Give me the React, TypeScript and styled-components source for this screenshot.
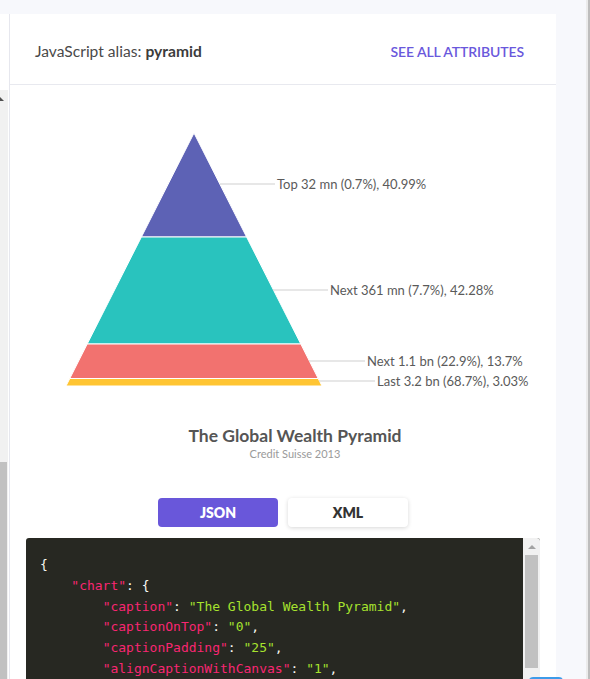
import React from "react";
import styled, {createGlobalStyle} from "styled-components";

const GlobalStyle = createGlobalStyle`
    html, body {
        margin: 0;
        padding: 0;
        background: #f7f8fc;
        overflow: hidden;
    }
    * {
        box-sizing: border-box;
    }
`

const uiFont = `Lato, "Open Sans", "Noto Sans", sans-serif`

interface Segment {
    points: string;
    color: string;
}

interface Label {
    x1: number;
    x2: number;
    y: number;
    text: string;
}

// pyramid slices, coordinates in svg space
const segments: Array<Segment> = [
    {points: "184,48 236.6,152 131.4,152", color: "#5d62b5"},
    {points: "131.4,152 236.6,152 290.8,259 77.2,259", color: "#29c3be"},
    {points: "77.2,259 290.8,259 308.2,293.5 59.8,293.5", color: "#f2726f"},
    {points: "59.8,293.5 308.2,293.5 312,301 56,301", color: "#ffc533"},
]

const labels: Array<Label> = [
    {x1: 210, x2: 265, y: 99, text: "Top 32 mn (0.7%), 40.99%"},
    {x1: 263, x2: 318, y: 205, text: "Next 361 mn (7.7%), 42.28%"},
    {x1: 299, x2: 355, y: 276, text: "Next 1.1 bn (22.9%), 13.7%"},
    {x1: 309, x2: 365, y: 296, text: "Last 3.2 bn (68.7%), 3.03%"},
]

type Tok = [string, "k" | "s" | "p"]

const codeLines: Array<{indent: number; toks: Array<Tok>}> = [
    {indent: 0, toks: [["{", "p"]]},
    {indent: 1, toks: [["\"chart\"", "k"], [": {", "p"]]},
    {indent: 2, toks: [["\"caption\"", "k"], [": ", "p"], ["\"The Global Wealth Pyramid\"", "s"], [",", "p"]]},
    {indent: 2, toks: [["\"captionOnTop\"", "k"], [": ", "p"], ["\"0\"", "s"], [",", "p"]]},
    {indent: 2, toks: [["\"captionPadding\"", "k"], [": ", "p"], ["\"25\"", "s"], [",", "p"]]},
    {indent: 2, toks: [["\"alignCaptionWithCanvas\"", "k"], [": ", "p"], ["\"1\"", "s"], [",", "p"]]},
]

export default function App() {
    return (
        <>
            <GlobalStyle/>
            <Page>
                <Main>
                    <LeftPanel>
                        <LeftHead/>
                        <LeftTrack>
                            <LeftArrow/>
                            <LeftThumb/>
                        </LeftTrack>
                    </LeftPanel>
                    <Card>
                        <Header>
                            <Alias>JavaScript alias: <b>pyramid</b></Alias>
                            <AttrLink>SEE ALL ATTRIBUTES</AttrLink>
                        </Header>
                        <ChartSvg width={546} height={315} viewBox="0 0 546 315">
                            {segments.map((s, key) => (
                                <polygon key={key} points={s.points} fill={s.color} stroke="#ffffff" strokeWidth={1}/>
                            ))}
                            {labels.map((l, key) => (
                                <g key={key}>
                                    <line x1={l.x1} x2={l.x2} y1={l.y} y2={l.y} stroke="#cfcfcf" strokeWidth={1.2}/>
                                    <text x={l.x2 + 2} y={l.y} dominantBaseline="central" fill="#5a5a5a"
                                          fontSize={13} fontFamily={uiFont}>{l.text}</text>
                                </g>
                            ))}
                        </ChartSvg>
                        <Caption>The Global Wealth Pyramid</Caption>
                        <SubCaption>Credit Suisse 2013</SubCaption>
                        <Tabs>
                            <Tab $active={true}>JSON</Tab>
                            <Tab $active={false}>XML</Tab>
                        </Tabs>
                        <CodeBox>
                            <Code>
                                {codeLines.map((line, key) => (
                                    <CodeLine key={key}>
                                        {"    ".repeat(line.indent)}
                                        {line.toks.map(([t, kind], i) => (
                                            <Token key={i} $kind={kind}>{t}</Token>
                                        ))}
                                    </CodeLine>
                                ))}
                            </Code>
                            <CodeTrack>
                                <UpArrow/>
                                <CodeThumb/>
                            </CodeTrack>
                        </CodeBox>
                    </Card>
                    <FloatButton/>
                </Main>
                <PageScroll/>
            </Page>
        </>
    )
}

const Page = styled.div`
    display: flex;
    flex-direction: row;
    width: 590px;
    height: 679px;
    overflow: hidden;
`

const Main = styled.div`
    position: relative;
    flex: 1;
    display: flex;
    flex-direction: row;
    padding-top: 14px;
`

const PageScroll = styled.div`
    width: 4px;
    height: 100%;
    border-left: 2px solid #ebebeb;
    background: #bdbdbd;
`

const LeftPanel = styled.div`
    width: 10px;
    display: flex;
    flex-direction: column;
    background: #ffffff;
    border-right: 1px solid #e6e7ee;
`

const LeftHead = styled.div`
    height: 76px;
    flex-shrink: 0;
`

const LeftTrack = styled.div`
    flex: 1;
    width: 8px;
    background: #f1f1f1;
    display: flex;
    flex-direction: column;
    overflow: hidden;
`

const LeftArrow = styled.div`
    margin-top: 7px;
    margin-left: -4px;
    width: 0;
    height: 0;
    border-left: 4px solid transparent;
    border-right: 4px solid transparent;
    border-bottom: 4px solid #505050;
`

const LeftThumb = styled.div`
    margin-top: 361px;
    width: 7px;
    flex: 1;
    background: #c1c1c1;
`

const Card = styled.div`
    width: 546px;
    background: #ffffff;
    display: flex;
    flex-direction: column;
    align-items: center;
    overflow: hidden;
    & > * {
        flex-shrink: 0;
    }
`

const Header = styled.div`
    align-self: stretch;
    height: 71px;
    border-bottom: 1px solid #e8e9ef;
    display: flex;
    flex-direction: row;
    align-items: center;
    justify-content: space-between;
    padding: 4px 32px 0 25px;
    font-family: ${uiFont};
`

const Alias = styled.div`
    font-size: 15.6px;
    color: #4a4a4a;
    b {
        font-weight: 700;
        color: #3c3c3c;
    }
`

const AttrLink = styled.a`
    font-size: 14px;
    font-weight: 600;
    color: #6a58dc;
    letter-spacing: -0.1px;
    cursor: pointer;
`

const ChartSvg = styled.svg`
    display: block;
`

const Caption = styled.div`
    margin-top: 26px;
    margin-left: 24px;
    font-family: ${uiFont};
    font-size: 17.5px;
    font-weight: 700;
    line-height: 20px;
    color: #555555;
`

const SubCaption = styled.div`
    margin-top: 1px;
    margin-left: 24px;
    font-family: ${uiFont};
    font-size: 11px;
    line-height: 14px;
    color: #9a9a9a;
`

const Tabs = styled.div`
    margin-top: 37px;
    display: flex;
    flex-direction: row;
    gap: 10px;
`

const Tab = styled.button<{$active: boolean}>`
    width: 120px;
    height: 29px;
    border: none;
    border-radius: 4px;
    font-family: ${uiFont};
    font-size: 14px;
    font-weight: 800;
    background: ${p => p.$active ? "#6957da" : "#ffffff"};
    color: ${p => p.$active ? "#ffffff" : "#333333"};
    box-shadow: ${p => p.$active ? "none" : "0 1px 4px rgba(0, 0, 0, 0.16)"};
    cursor: pointer;
`

const CodeBox = styled.div`
    align-self: stretch;
    margin: 11px 16px 0 16px;
    height: 200px;
    display: flex;
    flex-direction: row;
    background: #272822;
    border-top-left-radius: 3px;
    border-top-right-radius: 3px;
    overflow: hidden;
`

const Code = styled.pre`
    flex: 1;
    margin: 0;
    padding: 17px 14px;
    font-family: "DejaVu Sans Mono", "Liberation Mono", monospace;
    font-size: 13px;
    line-height: 20.8px;
    color: #f8f8f2;
`

const CodeLine = styled.div`
    white-space: pre;
`

const Token = styled.span<{$kind: "k" | "s" | "p"}>`
    color: ${p => p.$kind === "k" ? "#f92672" : p.$kind === "s" ? "#a6e22e" : "#f8f8f2"};
`

const CodeTrack = styled.div`
    width: 17px;
    background: #f1f1f1;
    display: flex;
    flex-direction: column;
    align-items: center;
`

const UpArrow = styled.div`
    margin-top: 7px;
    width: 0;
    height: 0;
    border-left: 4px solid transparent;
    border-right: 4px solid transparent;
    border-bottom: 4px solid #a3a3a3;
`

const CodeThumb = styled.div`
    margin-top: 6px;
    width: 13px;
    height: 113px;
    background: #c1c1c1;
`

const FloatButton = styled.div`
    position: absolute;
    left: 529px;
    top: 677px;
    width: 34px;
    height: 12px;
    border-radius: 4px 4px 0 0;
    background: #3d9be9;
`
